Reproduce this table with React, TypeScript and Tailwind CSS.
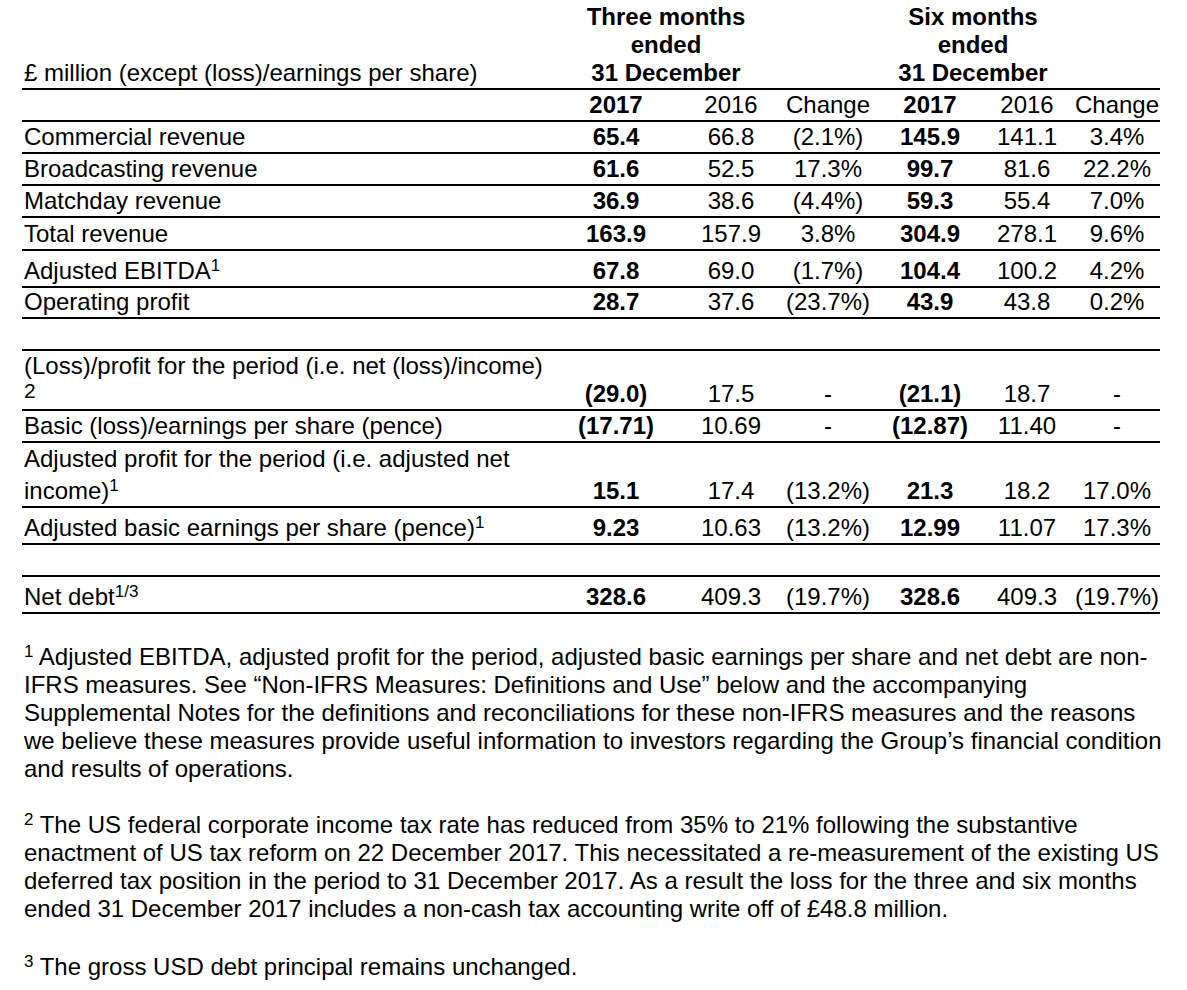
import React from "react";

type RowProps = {
  label: React.ReactNode;
  values: string[];
  h: string;
  border?: boolean;
};

const cols = "grid grid-cols-[524px_140px_90px_104px_100px_94px_86px] items-end";

function Sup({ children }: { children: React.ReactNode }) {
  return <span className="align-top text-[17px] leading-none">{children}</span>;
}

function Row({ label, values, h, border = true }: RowProps) {
  return (
    <div className={`${cols} ${h} ${border ? "border-b-2 border-black" : ""} pb-[1px]`}>
      <div className="pl-[2px]">{label}</div>
      {values.map((v, i) => (
        <div
          key={i}
          className={`text-center whitespace-nowrap ${i === 0 || i === 3 ? "font-bold" : ""}`}
        >
          {v}
        </div>
      ))}
    </div>
  );
}

function App() {
  return (
    <div
      className="w-[1187px] min-h-[990px] bg-white text-black text-[24px] leading-[28px]"
      style={{ fontFamily: '"Liberation Sans", Arial, sans-serif' }}
    >
      <div className="ml-[22px] w-[1138px]">
        {/* header */}
        <div className={`${cols} h-[90px] border-b-2 border-black pb-[1px]`}>
          <div className="pl-[2px]">£ million (except (loss)/earnings per share)</div>
          <div className="col-span-2 text-center font-bold pl-[10px]">
            Three months
            <br />
            ended
            <br />
            31 December
          </div>
          <div></div>
          <div className="col-span-2 text-center font-bold pr-[8px]">
            Six months
            <br />
            ended
            <br />
            31 December
          </div>
          <div></div>
        </div>

        <Row label="" values={["2017", "2016", "Change", "2017", "2016", "Change"]} h="h-[32px]" />
        <Row
          label="Commercial revenue"
          values={["65.4", "66.8", "(2.1%)", "145.9", "141.1", "3.4%"]}
          h="h-[32px]"
        />
        <Row
          label="Broadcasting revenue"
          values={["61.6", "52.5", "17.3%", "99.7", "81.6", "22.2%"]}
          h="h-[32px]"
        />
        <Row
          label="Matchday revenue"
          values={["36.9", "38.6", "(4.4%)", "59.3", "55.4", "7.0%"]}
          h="h-[32px]"
        />
        <Row
          label="Total revenue"
          values={["163.9", "157.9", "3.8%", "304.9", "278.1", "9.6%"]}
          h="h-[33px]"
        />
        <Row
          label={
            <>
              Adjusted EBITDA<Sup>1</Sup>
            </>
          }
          values={["67.8", "69.0", "(1.7%)", "104.4", "100.2", "4.2%"]}
          h="h-[37px]"
        />
        <Row
          label="Operating profit"
          values={["28.7", "37.6", "(23.7%)", "43.9", "43.8", "0.2%"]}
          h="h-[31px]"
        />
        <Row label="" values={["", "", "", "", "", ""]} h="h-[32px]" />
        <Row
          label={
            <div className="pb-[6px]">
              (Loss)/profit for the period (i.e. net (loss)/income)
              <div className="text-[21px] leading-[22px]">2</div>
            </div>
          }
          values={["(29.0)", "17.5", "-", "(21.1)", "18.7", "-"]}
          h="h-[60px]"
        />
        <Row
          label="Basic (loss)/earnings per share (pence)"
          values={["(17.71)", "10.69", "-", "(12.87)", "11.40", "-"]}
          h="h-[32px]"
        />
        <Row
          label={
            <>
              Adjusted profit for the period (i.e. adjusted net
              <br />
              <span className="inline-block pt-[4px]">
                income)<Sup>1</Sup>
              </span>
            </>
          }
          values={["15.1", "17.4", "(13.2%)", "21.3", "18.2", "17.0%"]}
          h="h-[65px]"
        />
        <Row
          label={
            <>
              Adjusted basic earnings per share (pence)<Sup>1</Sup>
            </>
          }
          values={["9.23", "10.63", "(13.2%)", "12.99", "11.07", "17.3%"]}
          h="h-[37px]"
        />
        <Row label="" values={["", "", "", "", "", ""]} h="h-[32px]" />
        <Row
          label={
            <>
              Net debt<Sup>1/3</Sup>
            </>
          }
          values={["328.6", "409.3", "(19.7%)", "328.6", "409.3", "(19.7%)"]}
          h="h-[37px]"
        />

        {/* footnotes */}
        <div className="mt-[29px] pl-[2px] whitespace-nowrap">
          <p>
            <Sup>1</Sup> Adjusted EBITDA, adjusted profit for the period, adjusted basic earnings per
            share and net debt are non-
            <br />
            IFRS measures. See “Non-IFRS Measures: Definitions and Use” below and the accompanying
            <br />
            Supplemental Notes for the definitions and reconciliations for these non-IFRS measures and
            the reasons
            <br />
            we believe these measures provide useful information to investors regarding the Group’s
            financial condition
            <br />
            and results of operations.
          </p>
          <p className="mt-[28px]">
            <Sup>2</Sup> The US federal corporate income tax rate has reduced from 35% to 21% following
            the substantive
            <br />
            enactment of US tax reform on 22 December 2017. This necessitated a re-measurement of the
            existing US
            <br />
            deferred tax position in the period to 31 December 2017. As a result the loss for the three
            and six months
            <br />
            ended 31 December 2017 includes a non-cash tax accounting write off of £48.8 million.
          </p>
          <p className="mt-[30px]">
            <Sup>3</Sup> The gross USD debt principal remains unchanged.
          </p>
        </div>
      </div>
    </div>
  );
}

export default App;
